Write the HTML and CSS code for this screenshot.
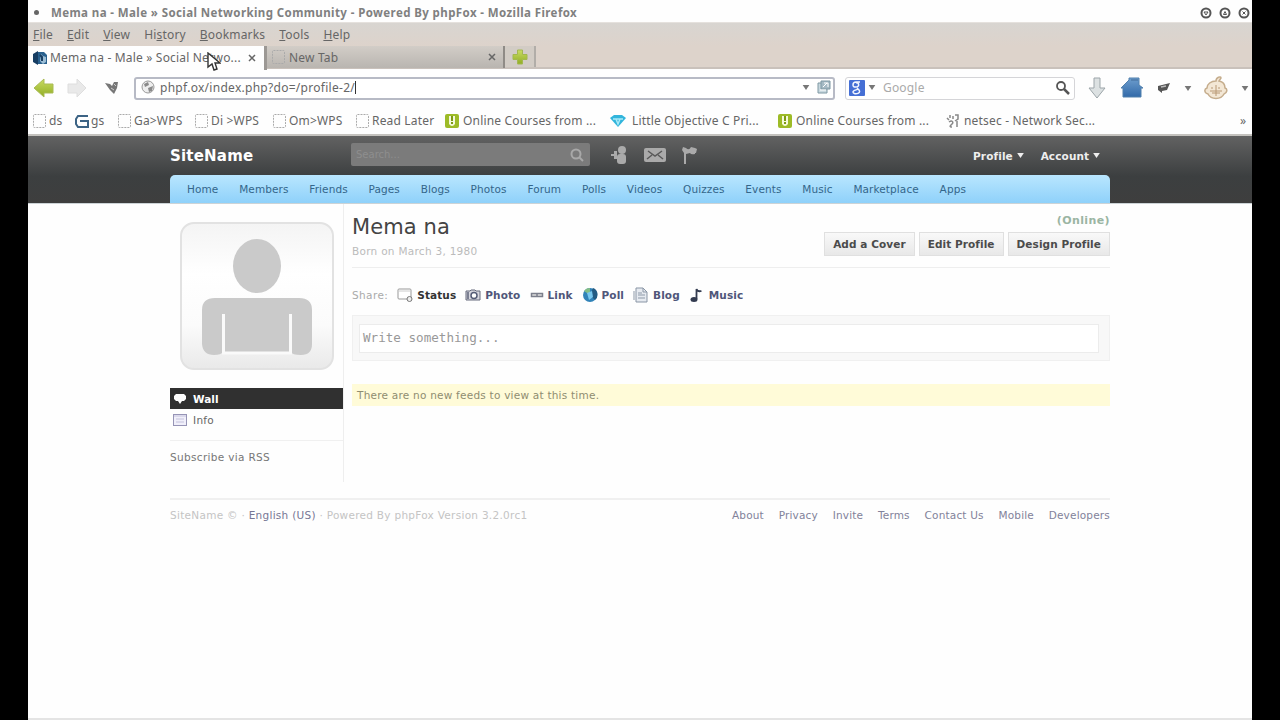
FILE: index.html
```html
<!DOCTYPE html>
<html lang="en">
<head>
    <meta charset="utf-8">
    <title>Mema na - Male » Social Networking Community</title>
    <link rel="stylesheet" href="styles.css">
</head>
<body>
    <!-- Shared icons -->
    <svg class="defs">
        <defs>
            <linearGradient id="green" x2="0" y2="1"><stop stop-color="#c9dc62"/><stop offset="1" stop-color="#91ad24"/></linearGradient>
            <linearGradient id="blue" x2="0" y2="1"><stop stop-color="#6d9dcd"/><stop offset="1" stop-color="#326aa9"/></linearGradient>
            <linearGradient id="card" x2="0" y2="1"><stop stop-color="#f4f4f4"/><stop offset=".35" stop-color="#fff"/><stop offset=".7" stop-color="#fbfbfb"/><stop offset="1" stop-color="#e9e9e9"/></linearGradient>
            <symbol id="blank" viewBox="0 0 16 16"><rect x="1.5" y="1.5" width="12" height="13" rx="1" fill="none" stroke="#aaa" stroke-dasharray="2 1"/></symbol>
            <symbol id="course" viewBox="0 0 16 16"><rect x="1" y="1" width="14" height="14" rx="2" fill="#9dbb27"/><path d="M5 3v8q3 4 6 0V3z" fill="#f5f9dc"/><path d="M8 3v5M8 9v2" stroke="#7d9b13" stroke-width="2"/></symbol>
            <symbol id="caret" viewBox="0 0 8 6"><path d="M0 0h8L4 6z" fill="currentColor"/></symbol>
        </defs>
    </svg>

    <div class="window">
        <div class="titlebar">
            <span class="dot"></span>
            <span class="title">Mema na - Male » Social Networking Community - Powered By phpFox - Mozilla Firefox</span>
            <div class="controls">
                <svg viewBox="0 0 12 12"><circle cx="6" cy="6" r="4.5"/><path d="M4 5l2 3 2-3z"/></svg>
                <svg viewBox="0 0 12 12"><circle cx="6" cy="6" r="4.5"/><path d="M4.500 7.500l1.500-3 1.500 3z"/></svg>
                <svg viewBox="0 0 12 12"><circle cx="6" cy="6" r="4.500"/><path d="M4.500 4.500l3 3m0-3l-3 3"/></svg>
            </div>
        </div>

        <div class="menubar">
            <span><u>F</u>ile</span>
            <span><u>E</u>dit</span>
            <span><u>V</u>iew</span>
            <span>Hi<u>s</u>tory</span>
            <span><u>B</u>ookmarks</span>
            <span><u>T</u>ools</span>
            <span><u>H</u>elp</span>
        </div>

        <div class="tabs">
            <div class="tab active">
                <svg class="icon" viewBox="0 0 16 16"><path d="M1 4l5-3v14l-5-3z" fill="#173e63"/><path d="M6 2h6l3 3v9H6z" fill="#2a618e"/><path d="M9 4l2 2 3 1v5l-3 2-3-3z" fill="#9bbdd5"/><path d="M8 5l2 2v4" fill="none" stroke="#193e62" stroke-width="2"/></svg>
                <span class="tab-text">Mema na - Male » Social Netwo...</span>
                <svg class="close" viewBox="0 0 8 8"><path d="M1 1l6 6M7 1L1 7"/></svg>
            </div>
            <div class="tab">
                <svg class="icon"><use href="#blank"/></svg>
                <span class="tab-text">New Tab</span>
                <svg class="close" viewBox="0 0 8 8"><path d="M1 1l6 6M7 1L1 7"/></svg>
            </div>
            <div class="new-tab">
                <svg viewBox="0 0 16 16"><path d="M5.500 1h5v4.500H15v5h-4.500V15h-5v-4.500H1v-5h4.500z" fill="url(#green)" stroke="#a3b84f"/></svg>
            </div>
        </div>

        <div class="toolbar">
            <svg class="back" viewBox="0 0 22 20"><path d="M1 10L11 1v5h9v9h-9v4z" fill="url(#green)" stroke="#a9bb55"/></svg>
            <svg class="forward" viewBox="0 0 22 20"><path d="M20 10L11 1v5H2v9h9v4z" fill="#e9e9e9" stroke="#dedede"/></svg>
            <svg class="shield" viewBox="0 0 14 14"><path d="M0 2l5 1 2 2 2-4 4 0-1 6-3 6-4-4z" fill="#777"/><path d="M6 7l3 2M9 3l2 2" stroke="#ccc"/></svg>
            <div class="urlbar">
                <svg class="globe" viewBox="0 0 14 14"><circle cx="7" cy="7" r="6" fill="#eee" stroke="#999"/><path d="M3 4l4-2 1 3-4 2zM7 8l5-2-1 5-3 1z" fill="#8a8a8a"/></svg>
                <span class="url">phpf.ox/index.php?do=/profile-2/</span><span class="cursor"></span>
                <svg class="caret"><use href="#caret"/></svg>
                <svg class="go" viewBox="0 0 14 14"><path d="M1 3h9v10H1z" fill="#c8d8df" stroke="#7e98a3"/><path d="M4 1h9v8H4z" fill="#a5bac4" stroke="#7e98a3"/><path d="M6 7l4-4M7 3h4v4M3 10h6" fill="none" stroke="#fff"/></svg>
            </div>
            <div class="searchbar">
                <svg class="engine" viewBox="0 0 16 16"><rect width="16" height="16" rx="1" fill="#456fd5"/><path d="M11 2H7C3 2 3 8 7 7c4 0 3-5 0-4M8 8l2 2c3 4-6 5-6 2 0-2 4-2 5-3" fill="none" stroke="#f3f6ff" stroke-width="1.500"/></svg>
                <svg class="caret"><use href="#caret"/></svg>
                <span>Google</span>
                <svg class="lens" viewBox="0 0 16 16"><circle cx="6" cy="6" r="4" fill="none" stroke="#555" stroke-width="1.800"/><path d="M9 9l5 5" stroke="#555" stroke-width="2.500"/></svg>
            </div>
            <svg class="download" viewBox="0 0 18 22"><path d="M6 1h6v10h5l-8 10-8-10h5z" fill="#dce1e2" stroke="#9ca5a9"/></svg>
            <svg class="home" viewBox="0 0 24 22"><path d="M1 11L9 3V1h10v7l4 3h-2v9H3v-9H1z" fill="url(#blue)" stroke="#5180ad"/><path d="M11 3h7" stroke="#406b97"/></svg>
            <svg class="pen" viewBox="0 0 14 12"><path d="M1 4l12-3-3 7-5 1v2L1 8z" fill="#555"/><path d="M4 5l5-1" stroke="#bbb" stroke-width="1.500"/></svg>
            <svg class="caret"><use href="#caret"/></svg>
            <svg class="face" viewBox="0 0 24 24"><path d="M12 5C12 1 17 0 17 2l-2 3c5 1 6 4 6 7 3 1 2 5-1 6-3 6-13 6-16 0-4-1-4-5-1-6 0-4 4-7 9-7z" fill="#f3e7d5" stroke="#c5ad8d" stroke-width="1.500"/><path d="M8 11v2M15 11v2M8 17h8M12 9v11M6 15h12" stroke="#b89874" fill="none"/></svg>
            <svg class="caret last"><use href="#caret"/></svg>
        </div>

        <div class="bookmarks">
            <span><svg><use href="#blank"/></svg>ds</span>
            <span><svg viewBox="0 0 16 16"><path d="M14 3H4L2 6v5l2 3h10V8H6" fill="none" stroke="#3c6384" stroke-width="2"/></svg>gs</span>
            <span><svg><use href="#blank"/></svg>Ga&gt;WPS</span>
            <span><svg><use href="#blank"/></svg>Di &gt;WPS</span>
            <span><svg><use href="#blank"/></svg>Om&gt;WPS</span>
            <span><svg><use href="#blank"/></svg>Read Later</span>
            <span class="wide"><svg><use href="#course"/></svg>Online Courses from ...</span>
            <span class="wide gem"><svg viewBox="0 0 16 16"><path d="M0 5l4-3h8l4 3-8 9z" fill="#32b5dc"/><path d="M3 6h10M6 6l2 5 2-5" fill="none" stroke="#a9eaf8" stroke-width="1.500"/></svg>Little Objective C Pri...</span>
            <span class="wide"><svg><use href="#course"/></svg>Online Courses from ...</span>
            <span class="wide"><svg viewBox="0 0 16 16"><path d="M2 5l2 2M5 2v3M8 3v3M4 9c3-2 5 0 3 2s-3 3 0 3M10 2h3v4l-3 2M12 8v6" fill="none" stroke="#888" stroke-width="1.500"/></svg>netsec - Network Sec...</span>
            <span class="more">»</span>
        </div>

        <!-- Site header -->
        <div class="site-header">
            <div class="container">
                <div class="top">
                    <div class="logo">SiteName</div>
                    <div class="site-search">
                        <span>Search...</span>
                        <svg viewBox="0 0 16 16"><circle cx="7" cy="7" r="4.500"/><path d="M10 10l4 4"/></svg>
                    </div>
                    <div class="notify">
                        <svg viewBox="0 0 18 20"><circle cx="11" cy="5" r="4"/><rect x="6" y="9" width="9" height="10" rx="3"/><path d="M0 9h3V6h3v8H3v-3H0z"/></svg>
                        <svg class="mail" viewBox="0 0 22 14"><rect width="22" height="14" rx="2"/><path d="M4 3l7 5 7-5M3 11l5-4M19 11l-5-4" fill="none" stroke="#595959" stroke-width="1.500"/></svg>
                        <svg viewBox="0 0 18 20"><path d="M2 2l3 1v16H3V8L1 5zM5 3q3 3 5-1l4 1v6q-4 1-5-1l-4 1zM14 3l2 1-1 4h-2z"/></svg>
                    </div>
                    <div class="account">
                        <span>Profile <svg><use href="#caret"/></svg></span>
                        <span>Account <svg><use href="#caret"/></svg></span>
                    </div>
                </div>
                <div class="nav">
                    <a>Home</a><a>Members</a><a>Friends</a><a>Pages</a><a>Blogs</a><a>Photos</a><a>Forum</a><a>Polls</a><a>Videos</a><a>Quizzes</a><a>Events</a><a>Music</a><a>Marketplace</a><a>Apps</a>
                </div>
            </div>
        </div>

        <!-- Profile -->
        <div class="container profile">
            <div class="sidebar">
                <svg class="avatar" viewBox="0 0 154 148">
                    <rect x="1" y="1" width="152" height="146" rx="13" fill="url(#card)" stroke="#e2e2e2" stroke-width="2"/>
                    <ellipse cx="77" cy="44" rx="24" ry="27" fill="#cacaca"/>
                    <path d="M35 76h84q13 0 13 12v34q0 11-11 11-9 0-10-3H43q-2 3-9 3-11 0-12-11V88q0-12 13-12z" fill="#cacaca"/>
                    <path d="M43.500 92v39h67V92" fill="none" stroke="#fafafa" stroke-width="3"/>
                </svg>
                <div class="side-item current">
                    <svg viewBox="0 0 14 12"><path d="M3 1h8l2 2v3l-2 2H9l-2 3-2-3H3L1 6V3z" fill="#fff"/></svg>Wall
                </div>
                <div class="side-item">
                    <svg viewBox="0 0 14 12"><rect x=".5" y=".5" width="13" height="11" fill="#f0effa" stroke="#9694b6"/><path d="M1 2h12M3 5h8M3 8h8" stroke="#c4c2dc"/></svg>Info
                </div>
                <div class="rss">Subscribe via RSS</div>
            </div>

            <div class="main">
                <div class="profile-head">
                    <div>
                        <h1>Mema na</h1>
                        <div class="born">Born on March 3, 1980</div>
                    </div>
                    <div class="profile-actions">
                        <div class="online">(Online)</div>
                        <div class="buttons">
                            <button>Add a Cover</button>
                            <button>Edit Profile</button>
                            <button>Design Profile</button>
                        </div>
                    </div>
                </div>

                <div class="share">
                    <span class="label">Share:</span>
                    <span class="selected"><svg viewBox="0 0 16 16"><rect x="1" y="2" width="13" height="10" rx="1" fill="#fff" stroke="#999"/><path d="M2 4h11" stroke="#ccc"/><circle cx="12.500" cy="12" r="2.500" fill="#eee" stroke="#777"/></svg>Status</span>
                    <span><svg viewBox="0 0 16 16"><path d="M1 4h4l1-1h4l1 1h4v9H1z" fill="#d5d5dd" stroke="#666a7c"/><circle cx="9" cy="8.500" r="3" fill="#fff" stroke="#555c76" stroke-width="1.500"/><path d="M3 5v7" stroke="#5e6378" stroke-width="1.500"/></svg>Photo</span>
                    <span class="link"><svg viewBox="0 0 16 16"><path d="M2.500 6.500h5.500v3H2.500zM8 6.500h5.500v3H8z" fill="#ddd" stroke="#7c7f8c" stroke-width="1.500"/></svg>Link</span>
                    <span><svg viewBox="0 0 16 16"><circle cx="8" cy="8" r="7" fill="#3183b8"/><path d="M8 8L2 4a7 7 0 0 1 6-3z" fill="#82bd86"/><path d="M8 8l3-7a7 7 0 0 1 2 12z" fill="#225b83"/><path d="M5 6l5-2 1 6-4 3z" fill="#77c7ee"/></svg>Poll</span>
                    <span><svg viewBox="0 0 16 16"><path d="M3 1h7l4 4v10H3z" fill="#e6eaf0" stroke="#8995a5"/><path d="M10 1v4h4M5 6h4M5 8h7M5 11h7M1 4v9" fill="none" stroke="#8d99a8"/></svg>Blog</span>
                    <span><svg viewBox="0 0 16 16"><ellipse cx="5" cy="12.500" rx="3.500" ry="2.500" fill="#333b50"/><path d="M7.500 12V2q1 3 5 2" fill="none" stroke="#333b50" stroke-width="1.800"/></svg>Music</span>
                </div>

                <div class="composer">
                    <div class="composer-input">Write something...</div>
                </div>
                <div class="notice">There are no new feeds to view at this time.</div>
            </div>
        </div>

        <div class="container footer">
            <div class="copyright">SiteName © · <b>English (US)</b> · Powered By phpFox Version 3.2.0rc1</div>
            <div class="footer-links">
                <a>About</a><a>Privacy</a><a>Invite</a><a>Terms</a><a>Contact Us</a><a>Mobile</a><a>Developers</a>
            </div>
        </div>

        <svg class="pointer" viewBox="0 0 14 20"><path d="M1 1v14l4-3 2 6 3-1-2-6h5z" fill="#fff" stroke="#333" stroke-width="1.400"/></svg>
    </div>
</body>
</html>
```
FILE: styles.css
```css
* {
    box-sizing: border-box;
}
body {
    margin: 0;
    background: #000;
    font-family: "DejaVu Sans", Verdana, sans-serif;
    overflow: hidden;
}
svg {
    flex: none;
}
.defs {
    position: absolute;
    width: 0;
    height: 0;
}
.window {
    position: relative;
    width: 1224px;
    height: 720px;
    margin: 0 auto;
    background: #fefefe;
    border-bottom: 2px solid #e4e4e4;
}

/* browser */
.titlebar, .menubar, .tabs, .toolbar, .bookmarks {
    display: flex;
    align-items: center;
    font-family: "Noto Sans", "Open Sans", sans-serif;
    font-size: 12px;
    letter-spacing: 0.18px;
    color: #666;
    white-space: nowrap;
}
.titlebar {
    height: 22px;
    padding: 3px 2px 0 6px;
    font-size: 11.5px;
    font-weight: bold;
    letter-spacing: 0.4px;
    color: #808080;
}
.dot {
    width: 5px;
    height: 5px;
    border-radius: 50%;
    background: #666;
    margin-right: 12px;
}
.controls {
    display: flex;
    gap: 7px;
    margin-left: auto;
}
.controls svg {
    width: 12px;
    height: 12px;
    fill: none;
    stroke: #555;
    stroke-width: 2;
}
.controls path {
    stroke-width: 1;
}
.menubar {
    height: 24px;
    padding-left: 5px;
    gap: 14px;
    background: linear-gradient(#d8d5d1, #ddd3cb);
    border-top: 1px solid #e5e1dd;
}
.tabs {
    height: 23px;
    background: #ddd3cb;
    border-bottom: 2px solid #c9c1bb;
}
.tab {
    display: flex;
    align-items: center;
    width: 238px;
    height: 22px;
    padding: 1px 7px 0 4px;
    background: linear-gradient(#d2cdc7, #b9b5b0);
    border-right: 2px solid #8f8b86;
}
.tab.active {
    width: 239px;
    height: 24px;
    padding: 0 8px 0 4px;
    background: #fefefe;
    border-right: 3px solid #9c9894;
    margin-top: 2px;
}
.icon {
    width: 16px;
    height: 16px;
    margin-right: 2px;
}
.close {
    width: 8px;
    height: 8px;
    margin-left: auto;
    stroke: #666;
    stroke-width: 1.5;
}
.new-tab {
    display: flex;
    width: 31px;
    height: 21px;
    padding: 3px 7px;
    border-right: 2px solid #b1ada8;
    background: #d2ccc5;
}
.new-tab svg {
    width: 16px;
    height: 16px;
}
.toolbar {
    height: 38px;
    padding-left: 5px;
}
.caret {
    width: 8px;
    height: 5px;
    color: #777;
}
.back, .forward {
    width: 22px;
    height: 20px;
}
.forward {
    margin-left: 11px;
}
.shield {
    width: 14px;
    height: 14px;
    margin-left: 17px;
}
.urlbar {
    display: flex;
    align-items: center;
    width: 701px;
    height: 23px;
    margin-left: 15px;
    padding: 0 2px 2px 5px;
    border: 2px solid #b7bac5;
    border-radius: 3px;
    background: #fff;
}
.url {
    letter-spacing: 0.28px;
}
.globe {
    width: 14px;
    height: 14px;
    margin-right: 5px;
}
.cursor {
    width: 1px;
    height: 13px;
    background: #333;
}
.urlbar .caret {
    margin-left: auto;
    margin-right: 7px;
}
.go {
    width: 14px;
    height: 14px;
}
.searchbar {
    display: flex;
    align-items: center;
    width: 230px;
    height: 23px;
    margin-left: 10px;
    padding: 0 3px 1px;
    border: 1px solid #d5d5d8;
    border-radius: 3px;
    color: #aaa;
    background: #fff;
}
.engine {
    width: 16px;
    height: 16px;
}
.searchbar .caret {
    margin: 0 7px 0 3px;
}
.lens {
    width: 16px;
    height: 16px;
    margin-left: auto;
}
.download {
    width: 18px;
    height: 22px;
    margin-left: 13px;
}
.home {
    width: 24px;
    height: 22px;
    margin-left: 14px;
}
.pen {
    width: 14px;
    height: 12px;
    margin: 0 13px 0 13px;
}
.face {
    width: 24px;
    height: 24px;
    margin: 0 13px 0 12px;
}
.bookmarks {
    display: grid;
    grid-template-columns: 42px 43px 77px 78px 83px 89px 166px 167px 168px 295px auto;
    height: 29px;
    padding-left: 4px;
    border-bottom: 2px solid #c4c2be;
}
.bookmarks span {
    display: flex;
    align-items: center;
}
.bookmarks svg {
    width: 16px;
    height: 16px;
    margin-right: 1px;
}
.bookmarks .wide svg {
    margin-right: 3px;
}
.bookmarks .gem svg {
    margin-right: 6px;
}

/* site */
.container {
    width: 940px;
    margin: 0 auto;
}
.site-header {
    height: 68px;
    border-bottom: 1px solid #ccd3d6;
    background: linear-gradient(#626262, #3c3f40 60%, #3e3e3e);
}
.top {
    display: flex;
    align-items: center;
    height: 39px;
}
.logo {
    width: 181px;
    font-size: 15px;
    font-weight: bold;
    letter-spacing: 0.2px;
    color: #fff;
}
.site-search {
    display: flex;
    align-items: center;
    justify-content: space-between;
    width: 239px;
    height: 23px;
    padding: 0 5px;
    margin-top: -2px;
    border-radius: 2px;
    font-size: 10px;
    color: #8e8e8e;
    background: #7b7b7b;
}
.site-search svg {
    width: 16px;
    height: 16px;
    fill: none;
    stroke: #a8a8a8;
    stroke-width: 2;
}
.notify {
    display: flex;
    align-items: center;
    gap: 15px;
    margin: -2px 0 0 21px;
}
.notify svg {
    width: 18px;
    height: 20px;
    fill: #aaa;
}
.notify .mail {
    height: 14px;
    width: 22px;
}
.account {
    display: flex;
    gap: 17px;
    margin-left: auto;
    padding-right: 10px;
    font-size: 10.5px;
    font-weight: bold;
    letter-spacing: 0.12px;
    color: #eee;
}
.account svg {
    width: 7px;
    height: 5px;
    vertical-align: 2px;
}
.nav {
    display: flex;
    align-items: center;
    gap: 20.75px;
    height: 28px;
    padding-left: 17px;
    border-radius: 5px 5px 0 0;
    font-size: 10.5px;
    letter-spacing: 0.1px;
    color: #34668a;
    background: linear-gradient(#b9e6fe, #8fd1fa);
}
.profile {
    display: flex;
    height: 294px;
}
.sidebar {
    width: 174px;
    height: 278px;
    padding-top: 18px;
    border-right: 1px solid #eee;
    font-size: 10.5px;
    color: #666;
}
.avatar {
    display: block;
    width: 154px;
    height: 148px;
    margin: 0 0 18px 10px;
}
.side-item {
    display: flex;
    align-items: center;
    height: 21px;
    padding-left: 3px;
}
.side-item svg {
    width: 14px;
    height: 12px;
    margin-right: 6px;
}
.side-item.current {
    width: 173px;
    font-weight: bold;
    color: #fff;
    background: #303030;
}
.side-item:not(.current) {
    letter-spacing: 0.3px;
}
.rss {
    margin-top: 10px;
    padding-top: 10px;
    border-top: 1px solid #f0f0f0;
    letter-spacing: 0.33px;
    color: #777;
}
.main {
    width: 758px;
    margin-left: 8px;
}
.profile-head {
    display: flex;
    justify-content: space-between;
    height: 64px;
    border-bottom: 1px solid #eee;
}
h1 {
    margin: 9px 0 4px;
    font-size: 21px;
    line-height: 28px;
    font-weight: normal;
    letter-spacing: 0.1px;
    color: #444;
}
.born {
    font-size: 10.5px;
    line-height: 12px;
    letter-spacing: 0.28px;
    color: #bbb;
}
.online {
    margin: 10px 0 5px;
    text-align: right;
    font-size: 11px;
    line-height: 13px;
    font-weight: bold;
    letter-spacing: 0.4px;
    color: #9bb5a3;
}
.buttons {
    display: flex;
    gap: 4px;
}
button {
    height: 24px;
    padding: 0 8px;
    border: 1px solid #e0e0e0;
    font-family: inherit;
    font-size: 10.5px;
    font-weight: bold;
    letter-spacing: 0.08px;
    color: #4b4b4b;
    background: linear-gradient(#f9f9f9, #e8e8e8);
}
.share {
    display: flex;
    align-items: center;
    height: 47px;
    padding-top: 6px;
    gap: 9px;
    font-size: 10.5px;
    font-weight: bold;
    letter-spacing: 0.1px;
    color: #50567a;
}
.share span {
    display: flex;
    align-items: center;
    gap: 4px;
}
.share .label {
    font-weight: normal;
    letter-spacing: 0.4px;
    color: #aaa;
}
.share .selected {
    color: #333;
}
.share .link {
    gap: 2px;
}
.share svg {
    width: 16px;
    height: 16px;
}
.composer {
    height: 46px;
    padding: 8px 10px 8px 6px;
    border: 1px solid #f0f0f0;
    background: #f8f8f8;
}
.composer-input {
    height: 29px;
    padding: 0 3px;
    border: 1px solid #ececec;
    font-family: "DejaVu Sans Mono", monospace;
    font-size: 12.6px;
    line-height: 25px;
    color: #999;
    background: #fff;
}
.notice {
    height: 22px;
    margin-top: 23px;
    padding-left: 5px;
    font-size: 10.5px;
    line-height: 22px;
    letter-spacing: 0.23px;
    color: #8f8d71;
    background: #fffbd8;
}
.footer {
    display: flex;
    justify-content: space-between;
    padding-top: 9px;
    border-top: 2px solid #f0f0f0;
    font-size: 10.5px;
    line-height: 13px;
    color: #c4c4c4;
}
.copyright {
    letter-spacing: 0.28px;
}
.copyright b {
    font-weight: normal;
    color: #777795;
}
.footer-links {
    display: flex;
    gap: 14.75px;
    letter-spacing: 0.18px;
    color: #82829a;
}
.pointer {
    position: absolute;
    left: 179px;
    top: 52px;
    width: 14px;
    height: 20px;
}
```
